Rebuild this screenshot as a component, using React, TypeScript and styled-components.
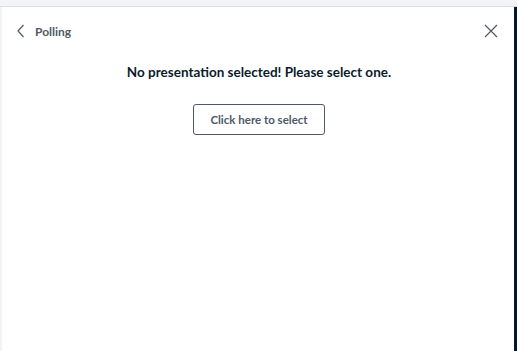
import React from "react";
import styled, { createGlobalStyle } from "styled-components";

const Global = createGlobalStyle`
  html, body { margin: 0; padding: 0; background: #fff; }
  body { font-family: "Source Sans Pro", Lato, "Open Sans", sans-serif; }
`;

const Page = styled.div`
  display: flex;
  flex-direction: column;
  width: 517px;
  height: 351px;
  overflow: hidden;
`;

const TopStrip = styled.div`
  height: 6px;
  flex: none;
  background: #f3f4f6;
  border-bottom: 1px solid #dcdfe3;
`;

const Body = styled.div`
  flex: 1;
  display: flex;
`;

const LeftEdge = styled.div`
  width: 2px;
  background: #f1f3f5;
`;

const RightEdge = styled.div`
  width: 3px;
  background: #06172a;
`;

const Panel = styled.div`
  flex: 1;
  display: flex;
  flex-direction: column;
  background: #fff;
`;

const Header = styled.div`
  display: flex;
  align-items: center;
  justify-content: space-between;
  padding: 16px 16px 0 14px;
  height: 16px;
`;

const Back = styled.button`
  display: flex;
  align-items: center;
  gap: 9px;
  border: none;
  background: none;
  padding: 0;
  font-family: Lato, sans-serif;
  font-size: 12px;
  font-weight: 700;
  color: #4e5a66;
  cursor: pointer;
`;

const Close = styled.button`
  border: none;
  background: none;
  padding: 0;
  display: flex;
  cursor: pointer;
`;

const Content = styled.div`
  display: flex;
  flex-direction: column;
  align-items: center;
  padding: 25px 0 0 2px;
  gap: 23px;
`;

const Title = styled.h2`
  margin: 0;
  font-family: Lato, sans-serif;
  font-size: 13.5px;
  font-weight: 700;
  color: #0b1b2c;
  line-height: 17px;
`;

const SelectButton = styled.button`
  box-sizing: border-box;
  width: 132px;
  height: 31px;
  border: 1px solid #4e5a66;
  border-radius: 3px;
  background: #fff;
  font-family: Lato, sans-serif;
  font-size: 11.5px;
  font-weight: 700;
  color: #4e5a66;
  cursor: pointer;
`;

export default function App() {
  return (
    <Page>
      <Global />
      <TopStrip />
      <Body>
        <LeftEdge />
        <Panel>
          <Header>
            <Back>
              <svg width="10" height="14" viewBox="0 0 10 14">
                <path d="M7.5 1 L2 7 L7.5 13" fill="none" stroke="#4e5a66" strokeWidth="1.2" />
              </svg>
              Polling
            </Back>
            <Close>
              <svg width="14" height="14" viewBox="0 0 14 14">
                <path d="M1 1 L13 13 M13 1 L1 13" fill="none" stroke="#4e5a66" strokeWidth="1.2" />
              </svg>
            </Close>
          </Header>
          <Content>
            <Title>No presentation selected! Please select one.</Title>
            <SelectButton>Click here to select</SelectButton>
          </Content>
        </Panel>
        <RightEdge />
      </Body>
    </Page>
  );
}
